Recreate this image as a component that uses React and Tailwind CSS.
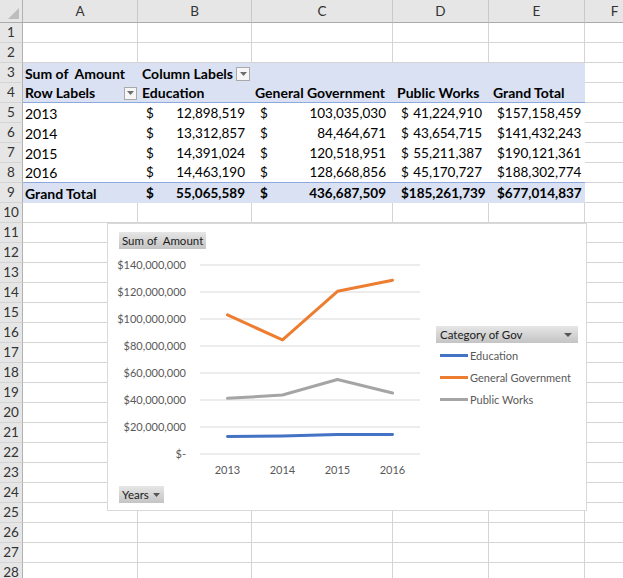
import React from "react";

const COLS = "grid grid-cols-[23px_115px_114px_141px_96px_96px_60px] h-[20px]";
const GL = "border-r border-b border-[#d4d4d4]";
const BLUE = "bg-[#d9e1f2]";
const TXT = "flex items-center pt-[1px] leading-none text-[14px]";

function RowHead({ n }) {
  return (
    <div className="bg-[#e6e6e6] border-r border-r-[#b1b1b1] border-b border-b-[#d4d4d4] flex items-center justify-center pt-[1px] text-[13.5px] text-[#333] leading-none">
      {n}
    </div>
  );
}

function Dd({ size = "w-[14px] h-[14px]" }) {
  return (
    <div className={`${size} border border-[#a9a9a9] bg-[#f6f6f6] flex items-center justify-center shrink-0`}>
      <svg width="7" height="4" viewBox="0 0 7 4">
        <path d="M0 0H7L3.5 4Z" fill="#6e6e6e" />
      </svg>
    </div>
  );
}

function EmptyRow({ n }) {
  return (
    <div className={COLS}>
      <RowHead n={n} />
      <div className={GL} />
      <div className={GL} />
      <div className={GL} />
      <div className={GL} />
      <div className={GL} />
      <div className={GL} />
    </div>
  );
}

function Acc({ v, bold, extra = "" }) {
  return (
    <div className={`flex items-center justify-between pt-[1px] leading-none text-[13.5px] pl-[8px] pr-[7px] ${bold ? "font-bold" : ""} ${extra}`}>
      <span>$</span>
      <span>{v}</span>
    </div>
  );
}

const data = [
  ["2013", "12,898,519", "103,035,030", "41,224,910", "157,158,459"],
  ["2014", "13,312,857", "84,464,671", "43,654,715", "141,432,243"],
  ["2015", "14,391,024", "120,518,951", "55,211,387", "190,121,361"],
  ["2016", "14,463,190", "128,668,856", "45,170,727", "188,302,774"],
];

function Chart() {
  const yLabels = [
    "$140,000,000",
    "$120,000,000",
    "$100,000,000",
    "$80,000,000",
    "$60,000,000",
    "$40,000,000",
    "$20,000,000",
    "$-",
  ];
  const xs = [119.5, 174.5, 229.5, 284.5];
  const yv = (v) => 230 - v * 1.35;
  const series = [
    { name: "Education", color: "#4472c4", vals: [12.898519, 13.312857, 14.391024, 14.46319] },
    { name: "General Government", color: "#ed7d31", vals: [103.03503, 84.464671, 120.518951, 128.668856] },
    { name: "Public Works", color: "#a5a5a5", vals: [41.22491, 43.654715, 55.211387, 45.170727] },
  ];
  const font = "Lato, 'Liberation Sans', sans-serif";
  return (
    <div className="absolute left-[107px] top-[223px] w-[480px] h-[288px] bg-white border border-[#d9d9d9]">
      <svg className="absolute left-0 top-0" width="480" height="288" viewBox="0 0 480 288">
        {yLabels.map((l, i) => (
          <g key={l}>
            <line x1="92" x2="312" y1={41 + i * 27} y2={41 + i * 27} stroke="#d9d9d9" strokeWidth="1" />
            <text x="78" y={41 + i * 27 + 4} textAnchor="end" fontFamily={font} fontSize="11" fill="#595959">
              {l}
            </text>
          </g>
        ))}
        {["2013", "2014", "2015", "2016"].map((y, i) => (
          <text key={y} x={xs[i]} y="250" textAnchor="middle" fontFamily={font} fontSize="11" fill="#595959">
            {y}
          </text>
        ))}
        {series.map((s) => (
          <polyline
            key={s.name}
            points={s.vals.map((v, i) => `${xs[i]},${yv(v)}`).join(" ")}
            fill="none"
            stroke={s.color}
            strokeWidth="3"
            strokeLinejoin="round"
            strokeLinecap="round"
          />
        ))}
      </svg>

      <div className="absolute left-[11px] top-[8px] h-[17px] px-[3px] flex items-center bg-linear-to-b from-[#e6e6e6] to-[#c4c4c4] text-[11.5px] text-[#1a1a1a] whitespace-pre leading-none">
        Sum of  Amount
      </div>

      <div className="absolute left-[11px] top-[262px] h-[17px] pl-[3px] pr-[4px] flex items-center gap-[4px] bg-linear-to-b from-[#e6e6e6] to-[#c4c4c4] text-[11.5px] text-[#1a1a1a] leading-none">
        <span>Years</span>
        <svg width="7" height="4" viewBox="0 0 7 4">
          <path d="M0 0H7L3.5 4Z" fill="#555" />
        </svg>
      </div>

      <div className="absolute left-[328px] top-[102px] w-[142px] flex flex-col">
        <div className="h-[17px] pl-[4px] pr-[6px] flex items-center justify-between bg-linear-to-b from-[#e6e6e6] to-[#c4c4c4] text-[11.5px] text-[#1a1a1a] leading-none">
          <span>Category of Gov</span>
          <svg width="8" height="4" viewBox="0 0 8 4">
            <path d="M0 0H8L4 4Z" fill="#555" />
          </svg>
        </div>
        <div className="mt-[1px] flex flex-col">
          {series.map((s) => (
            <div key={s.name} className="h-[22px] flex items-center pl-[4px] gap-[2px]">
              <div className="w-[28px] h-[3px]" style={{ backgroundColor: s.color }} />
              <span className="text-[11px] text-[#595959] leading-none">{s.name}</span>
            </div>
          ))}
        </div>
      </div>
    </div>
  );
}

export default function App() {
  const letters = ["A", "B", "C", "D", "E", "F"];
  return (
    <div className="relative w-[623px] h-[578px] overflow-hidden bg-white font-[Lato,'Liberation_Sans',sans-serif] text-[13.5px] text-black">
      {/* column headers */}
      <div className="grid grid-cols-[23px_115px_114px_141px_96px_96px_60px] h-[23px]">
        <div className="bg-[#e6e6e6] border-r border-r-[#b1b1b1] border-b border-b-[#ababab] relative">
          <svg className="absolute left-[8px] top-[8px]" width="11" height="11" viewBox="0 0 11 11">
            <path d="M11 0V11H0Z" fill="#bdbdbd" />
          </svg>
        </div>
        {letters.map((l) => (
          <div
            key={l}
            className="bg-[#e6e6e6] border-r border-r-[#c8c8c8] border-b border-b-[#ababab] flex items-center justify-center pt-[1px] text-[13.5px] text-[#333]"
          >
            {l}
          </div>
        ))}
      </div>

      <EmptyRow n={1} />
      <EmptyRow n={2} />

      {/* row 3 */}
      <div className={COLS}>
        <RowHead n={3} />
        <div className={`${BLUE} ${TXT} pl-[2px] font-bold whitespace-pre`}>Sum of  Amount</div>
        <div className={`${BLUE} ${TXT} justify-between pl-[4px] pr-[2px] font-bold`}>
          <span>Column Labels</span>
          <Dd />
        </div>
        <div className={BLUE} />
        <div className={BLUE} />
        <div className={BLUE} />
        <div className={GL} />
      </div>

      {/* row 4 */}
      <div className={COLS}>
        <RowHead n={4} />
        <div className={`${BLUE} border-b border-[#8ea9db] ${TXT} justify-between pl-[2px] pr-[1px] font-bold`}>
          <span>Row Labels</span>
          <Dd size="w-[13px] h-[13px]" />
        </div>
        <div className={`${BLUE} border-b border-[#8ea9db] ${TXT} pl-[4px] font-bold`}>Education</div>
        <div className={`${BLUE} border-b border-[#8ea9db] ${TXT} pl-[3px] font-bold`}>General Government</div>
        <div className={`${BLUE} border-b border-[#8ea9db] ${TXT} pl-[4px] font-bold`}>Public Works</div>
        <div className={`${BLUE} border-b border-[#8ea9db] ${TXT} pl-[4px] font-bold`}>Grand Total</div>
        <div className={GL} />
      </div>

      {data.map((r, i) => {
        const last = i === data.length - 1;
        const b = last ? "border-b border-[#8ea9db]" : "";
        return (
          <div key={r[0]} className={COLS}>
            <RowHead n={5 + i} />
            <div className={`${TXT} pl-[2px] ${b}`}>{r[0]}</div>
            <Acc v={r[1]} extra={b} />
            <Acc v={r[2]} extra={b} />
            <Acc v={r[3]} extra={b} />
            <Acc v={r[4]} extra={b} />
            <div className={GL} />
          </div>
        );
      })}

      {/* row 9 */}
      <div className={COLS}>
        <RowHead n={9} />
        <div className={`${BLUE} ${TXT} pl-[2px] font-bold`}>Grand Total</div>
        <Acc v="55,065,589" bold extra={BLUE} />
        <Acc v="436,687,509" bold extra={BLUE} />
        <Acc v="185,261,739" bold extra={BLUE} />
        <Acc v="677,014,837" bold extra={BLUE} />
        <div className={GL} />
      </div>

      {Array.from({ length: 19 }, (_, i) => (
        <EmptyRow key={i} n={10 + i} />
      ))}

      <Chart />
    </div>
  );
}
